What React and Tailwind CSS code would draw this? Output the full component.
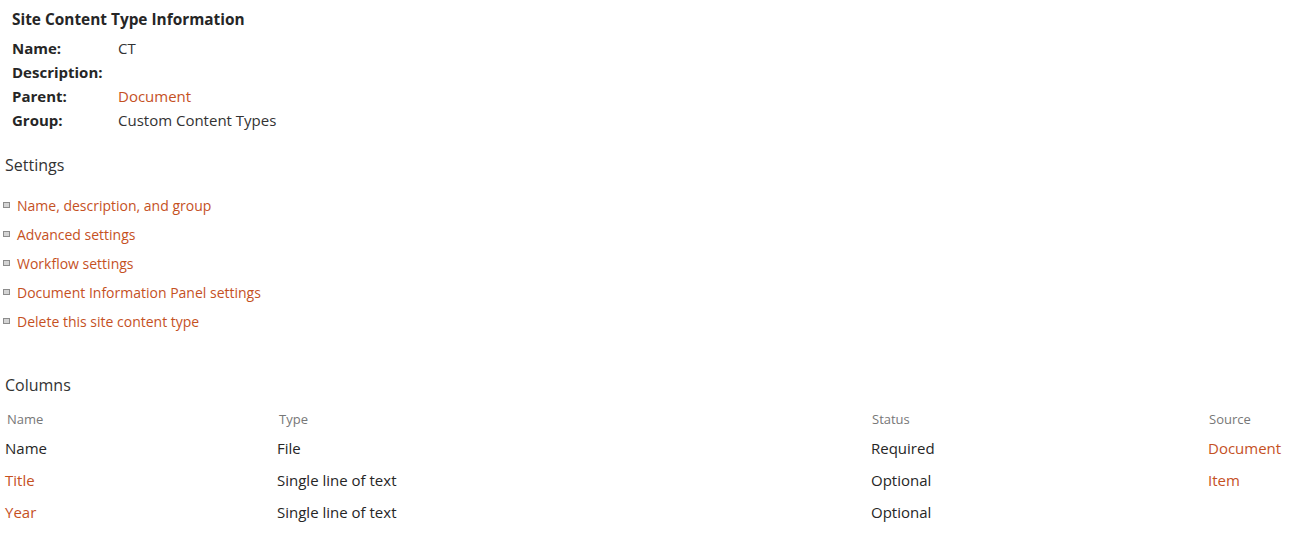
import React from "react";

const info = [
  { label: "Name:", value: "CT" },
  { label: "Description:", value: "" },
  { label: "Parent:", value: "Document", link: true },
  { label: "Group:", value: "Custom Content Types" },
];

const settings = [
  "Name, description, and group",
  "Advanced settings",
  "Workflow settings",
  "Document Information Panel settings",
  "Delete this site content type",
];

const columns = [
  { name: "Name", nameLink: false, type: "File", status: "Required", source: "Document" },
  { name: "Title", nameLink: true, type: "Single line of text", status: "Optional", source: "Item" },
  { name: "Year", nameLink: true, type: "Single line of text", status: "Optional", source: "" },
];

const App = () => {
  return (
    <div className="min-h-screen bg-white text-[#333] font-['Segoe_UI','Open_Sans',sans-serif] text-[15px]">
      <div className="pl-3 pt-[10px]">
        <h2 className="font-bold text-[15.4px] leading-5 text-[#262626]">Site Content Type Information</h2>
        <div className="mt-[6px]">
          {info.map((row) => (
            <div key={row.label} className="flex h-6 items-center">
              <span className="w-[106px] font-bold text-[#262626]">{row.label}</span>
              <span className={row.link ? "text-[#c5511f]" : "text-[#333]"}>{row.value}</span>
            </div>
          ))}
        </div>
      </div>

      <div className="pl-[5px] mt-[21px]">
        <h3 className="text-base text-[#333] leading-6">Settings</h3>
        <ul className="mt-[16px] flex flex-col gap-[5px]">
          {settings.map((s) => (
            <li key={s} className="flex h-6 items-center">
              <span className="-ml-[2px] mr-[7px] w-[7px] h-[6px] border border-[#8c8c8c] bg-[#d4d4d4]"></span>
              <span className="text-[#c5511f] text-[14px]">{s}</span>
            </li>
          ))}
        </ul>
      </div>

      <div className="pl-[5px] mt-[40px] pr-[20px]">
        <h3 className="text-base text-[#333] leading-6">Columns</h3>
        <div className="mt-[13px] grid grid-cols-[272px_594px_337px_1fr] h-5 items-center text-[13px] text-[#777]">
          <span className="pl-[2px]">Name</span>
          <span className="pl-[2px]">Type</span>
          <span className="pl-[1px]">Status</span>
          <span className="pl-[1px]">Source</span>
        </div>
        <div className="mt-[2px]">
          {columns.map((c) => (
            <div key={c.name} className="grid grid-cols-[272px_594px_337px_1fr] h-8 items-center">
              <span className={c.nameLink ? "text-[#c5511f]" : "text-[#262626]"}>{c.name}</span>
              <span className="text-[#262626]">{c.type}</span>
              <span className="text-[#262626]">{c.status}</span>
              <span className="text-[#c5511f]">{c.source}</span>
            </div>
          ))}
        </div>
      </div>
    </div>
  );
};

export default App;
